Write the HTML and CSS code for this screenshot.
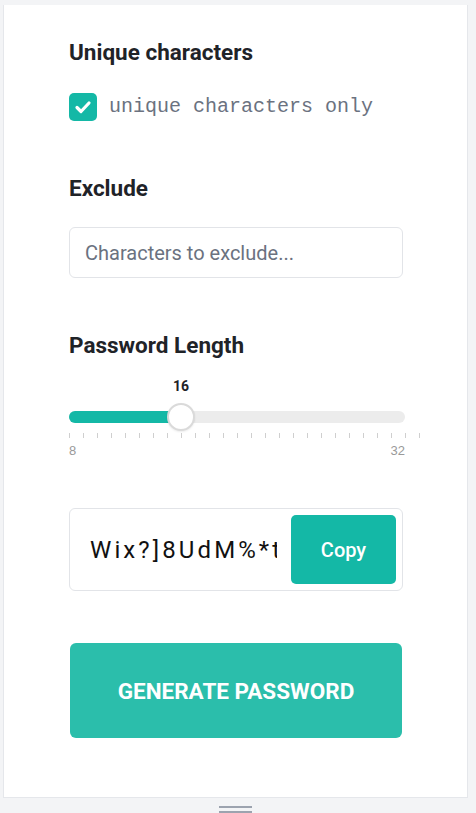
FILE: index.html
```html
<!DOCTYPE html>
<html lang="en">
<head>
<meta charset="utf-8">
<title>Password Generator</title>
<link rel="stylesheet" href="styles.css">
</head>
<body>
<div class="page">
  <main class="card">
    <section class="group group-unique">
      <h2 class="label">Unique characters</h2>
      <label class="check-row">
        <span class="checkbox">
          <svg viewBox="0 0 28 28" width="28" height="28"><path d="M8 14.5l4 4 8-8.5" fill="none" stroke="#fff" stroke-width="3.2" stroke-linecap="round" stroke-linejoin="round"/></svg>
        </span>
        <span class="check-text">unique characters only</span>
      </label>
    </section>

    <section class="group">
      <h2 class="label">Exclude</h2>
      <input class="text-input" type="text" placeholder="Characters to exclude...">
    </section>

    <section class="group">
      <h2 class="label">Password Length</h2>
      <div class="slider">
        <div class="slider-value-row"><span class="slider-value">16</span></div>
        <div class="track">
          <div class="fill"></div>
          <div class="thumb"></div>
        </div>
        <div class="ticks">
          <i></i><i></i><i></i><i></i><i></i><i></i><i></i><i></i><i></i><i></i><i></i><i></i><i></i><i></i><i></i><i></i><i></i><i></i><i></i><i></i><i></i><i></i><i></i><i></i><i></i><i></i>
        </div>
        <div class="range-labels"><span>8</span><span>32</span></div>
      </div>
    </section>

    <div class="result">
      <div class="result-field"><span class="result-text">Wix?]8UdM%*tq3#Lz</span></div>
      <button class="copy-btn" type="button">Copy</button>
    </div>

    <button class="generate-btn" type="button">GENERATE PASSWORD</button>
  </main>
  <div class="handle"><span></span><span></span></div>
</div>
</body>
</html>
```

FILE: styles.css
```css
* { box-sizing: border-box; }

html, body {
  margin: 0;
  padding: 0;
  background: #f3f4f6;
  font-family: Roboto, "Liberation Sans", Arial, sans-serif;
  color: #1f2328;
}

.page {
  width: 476px;
  height: 813px;
  padding: 5px 8px 0 3px;
  overflow: hidden;
}

.card {
  background: #ffffff;
  border: 1px solid #e5e7eb;
  border-top: 0;
  height: 793px;
  padding: 32px 64px 0 65px;
  display: flex;
  flex-direction: column;
}

.label {
  margin: 0;
  font-size: 22.5px;
  line-height: 30px;
  font-weight: 700;
  color: #1f2328;
}

.group { display: flex; flex-direction: column; }
.group + .group { margin-top: 52px; }

.check-row {
  display: flex;
  align-items: center;
  gap: 12px;
  margin-top: 26px;
}

.checkbox {
  width: 28px;
  height: 28px;
  border-radius: 5px;
  background: #14b8a6;
  display: flex;
}

.check-text {
  font-family: "Liberation Mono", "DejaVu Sans Mono", monospace;
  font-size: 20px;
  color: #6b7280;
  line-height: 26px;
}

.text-input {
  margin-top: 24px;
  width: 334px;
  height: 51px;
  border: 1px solid #e2e4e8;
  border-radius: 6px;
  padding: 0 15px;
  font-family: Roboto, "Liberation Sans", sans-serif;
  font-size: 20px;
  color: #374151;
  outline: none;
}
.text-input::placeholder { color: #6b7280; }

.slider { margin-top: 17px; position: relative; }

.slider-value-row {
  width: 336px;
  height: 18px;
  position: relative;
}
.slider-value {
  position: absolute;
  left: 112px;
  transform: translateX(-50%);
  font-size: 14px;
  font-weight: 700;
  line-height: 18px;
  color: #1f2328;
}

.track {
  position: relative;
  width: 336px;
  height: 12px;
  margin-top: 16px;
  border-radius: 6px;
  background: #ececec;
}
.fill {
  width: 112px;
  height: 100%;
  border-radius: 6px 0 0 6px;
  background: #14b8a6;
}
.thumb {
  position: absolute;
  left: 98px;
  top: -8px;
  width: 28px;
  height: 28px;
  border-radius: 50%;
  background: #fff;
  border: 2px solid #dadada;
  box-shadow: 0 1px 2px rgba(0,0,0,0.08);
}

.ticks {
  display: flex;
  justify-content: space-between;
  width: 351px;
  margin-top: 10px;
  height: 5px;
}
.ticks i {
  display: block;
  width: 1px;
  height: 5px;
  background: #cfcfcf;
}

.range-labels {
  width: 336px;
  display: flex;
  justify-content: space-between;
  margin-top: 5px;
  font-family: "Liberation Sans", Arial, sans-serif;
  font-size: 13px;
  line-height: 15px;
  color: #9a9a9a;
}

.result {
  margin-top: 50px;
  width: 334px;
  height: 83px;
  border: 1px solid #e2e4e8;
  border-radius: 6px;
  padding: 6px;
  display: flex;
  align-items: stretch;
}
.result-field {
  flex: 1;
  min-width: 0;
  margin: 0 14px 0 14px;
  overflow: hidden;
  display: flex;
  align-items: center;
}
.result-text {
  white-space: nowrap;
  font-size: 24px;
  letter-spacing: 3.1px;
  color: #111;
}
.copy-btn {
  width: 105px;
  flex: none;
  border: 0;
  border-radius: 5px;
  background: #14b8a6;
  color: #fff;
  font-family: Roboto, "Liberation Sans", sans-serif;
  font-size: 20px;
  font-weight: 500;
}

.generate-btn {
  margin: 52px 1px 0;
  height: 95px;
  border: 0;
  border-radius: 6px;
  background: #2bbeab;
  color: #fff;
  font-family: Roboto, "Liberation Sans", sans-serif;
  font-size: 22.5px;
  font-weight: 700;
}

.handle {
  display: flex;
  flex-direction: column;
  align-items: center;
  gap: 3px;
  margin-top: 8px;
}
.handle span {
  display: block;
  width: 33px;
  height: 2px;
  background: #9ca3af;
}
```
